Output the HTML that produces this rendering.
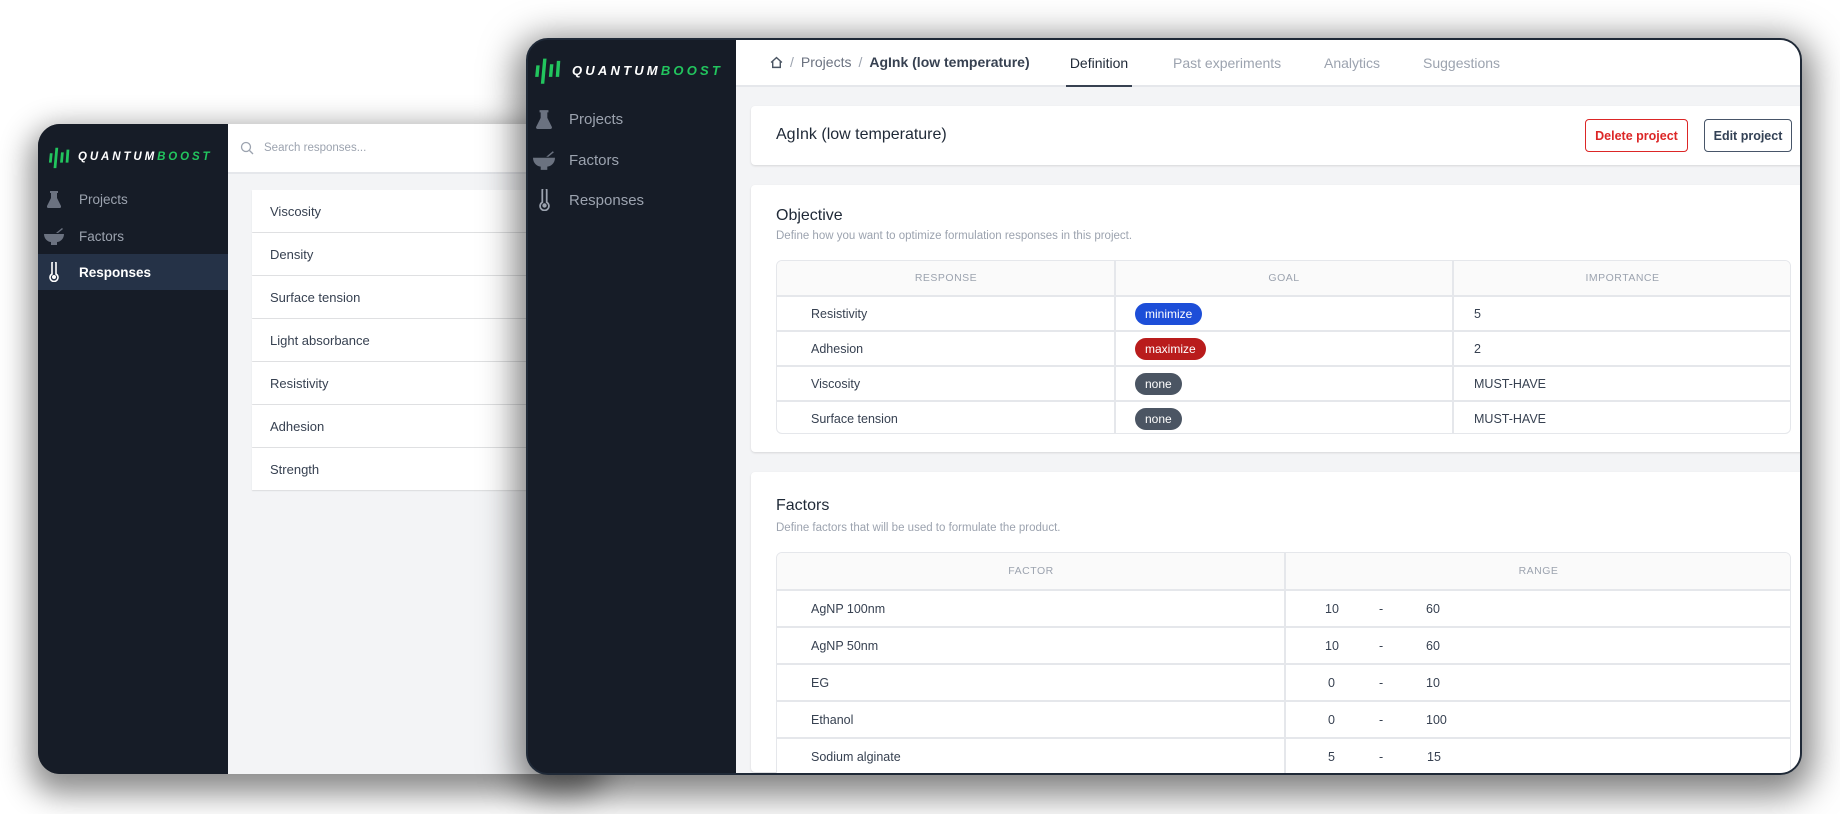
<!DOCTYPE html>
<html><head><meta charset="utf-8"><style>
*{box-sizing:border-box;margin:0;padding:0}
body{width:1840px;height:814px;background:#fff;position:relative;overflow:hidden;font-family:"Liberation Sans",sans-serif;color:#374151}
.abs{position:absolute}
.win{position:absolute;background:#161c27;border-radius:22px;overflow:hidden;box-shadow:0 12px 30px 8px rgba(0,0,0,.45)}
.side{position:absolute;left:0;top:0;bottom:0;background:#161c27}
.logo{position:absolute;display:flex;align-items:center;font-weight:bold;font-style:italic;letter-spacing:3.2px;font-size:13px}
.logo .q{color:#fff}.logo .b{color:#22c55e}
.nav{position:absolute;left:0;right:0;height:36px;display:flex;align-items:center;color:#9ca3af;font-size:15px}
.nav svg{position:absolute}
.main{position:absolute;background:#f3f4f6}
.card{position:absolute;background:#fff;border-radius:4px;box-shadow:0 1px 2px rgba(0,0,0,.12)}
.tbl{position:absolute;border:1px solid #e5e7eb;border-radius:6px;overflow:hidden;background:#fff;font-size:12.5px;color:#374151}
.row{position:absolute;left:0;right:0;border-top:2px solid #e5e7eb}
.hdr{background:#fafafa;color:#9ca3af;font-size:10.5px;letter-spacing:.5px}
.cell{position:absolute;top:0;bottom:0;display:flex;align-items:center}
.vl{position:absolute;top:0;bottom:0;width:2px;background:#e5e7eb}
.badge{color:#fff;border-radius:11px;height:22px;padding:0 10px;font-size:12px;display:flex;align-items:center}
.lst{position:absolute;left:252px;width:290px;height:42px;background:#fff;display:flex;align-items:center;padding-left:18px;font-size:13px;color:#374151;box-shadow:0 1px 1px rgba(0,0,0,.1)}
</style></head><body>

<!-- back window -->
<div class="win" style="left:38px;top:124px;width:560px;height:650px;">
  <div class="side" style="width:190px"></div>
  <div class="logo" style="left:10px;top:20px;letter-spacing:2.9px;font-size:11.5px">
    <svg width="26" height="26" viewBox="0 0 28 28"><path d="M2 10h3l-1 10H1z M8 4h3l-2 22H6z M14 9h3l-1 11h-3z M20 6h3l-1 14h-3z" fill="#22c55e"/></svg>
    <span class="q" style="margin-left:4px">QUANTUM</span><span class="b">BOOST</span></div>
  <div class="nav" style="top:57px;padding-left:41px;font-size:13.5px"><svg style="left:9px" width="14" height="18" viewBox="0 0 14 18"><path d="M3 1h8v2h-1v5l4 8c.5 1-.2 2-1.2 2H1.2C.2 18-.5 17 0 16l4-8V3H3z" fill="#6b7280"/></svg>Projects</div>
  <div class="nav" style="top:94px;padding-left:41px;font-size:13.5px"><svg style="left:6px" width="20" height="18" viewBox="0 0 20 18"><path d="M0 7h20c0 5-4 8-7 8v3H7v-3C4 15 0 12 0 7z M12 6l6-5 1 1-5 4z" fill="#6b7280"/></svg>Factors</div>
  <div class="nav" style="top:130px;padding-left:41px;background:#253247;color:#fff;font-weight:bold;font-size:13.5px"><svg style="left:11px" width="10" height="20" viewBox="0 0 10 20"><path d="M3 1a2 2 0 014 0v11a4 4 0 11-4 0z" fill="none" stroke="#fff" stroke-width="1.6"/><circle cx="5" cy="15" r="2" fill="#fff"/></svg>Responses</div>
  <div class="main" style="left:190px;top:0;right:0;bottom:0">
    <div class="abs" style="left:0;right:0;top:0;height:50px;background:#fff;border-bottom:2px solid #e5e7eb;display:flex;align-items:center;padding-left:12px;color:#9ca3af;font-size:11.5px">
      <svg width="14" height="14" viewBox="0 0 14 14" style="margin-right:10px"><circle cx="6" cy="6" r="4.5" fill="none" stroke="#9ca3af" stroke-width="1.3"/><path d="M9.5 9.5l3.5 3.5" stroke="#9ca3af" stroke-width="1.3"/></svg>Search responses...</div>
  </div>
</div>
<div class="lst" style="top:190px">Viscosity</div>
<div class="lst" style="top:233px">Density</div>
<div class="lst" style="top:276px">Surface tension</div>
<div class="lst" style="top:319px">Light absorbance</div>
<div class="lst" style="top:362px">Resistivity</div>
<div class="lst" style="top:405px">Adhesion</div>
<div class="lst" style="top:448px">Strength</div>

<!-- front window -->
<div class="win" style="left:526px;top:38px;width:1276px;height:737px;border:2px solid #1f2937;box-shadow:0 10px 35px 10px rgba(0,0,0,.5)">
  <div class="side" style="width:208px"></div>
  <div class="logo" style="left:6px;top:14px;">
    <svg width="32" height="32" viewBox="0 0 28 28"><path d="M2 10h3l-1 10H1z M8 4h3l-2 22H6z M14 9h3l-1 11h-3z M20 6h3l-1 14h-3z" fill="#22c55e"/></svg>
    <span class="q" style="margin-left:6px">QUANTUM</span><span class="b">BOOST</span></div>
  <div class="nav" style="top:61px;padding-left:41px"><svg style="left:8px" width="16" height="20" viewBox="0 0 14 18"><path d="M3 1h8v2h-1v5l4 8c.5 1-.2 2-1.2 2H1.2C.2 18-.5 17 0 16l4-8V3H3z" fill="#6b7280"/></svg>Projects</div>
  <div class="nav" style="top:102px;padding-left:41px"><svg style="left:5px" width="22" height="20" viewBox="0 0 20 18"><path d="M0 7h20c0 5-4 8-7 8v3H7v-3C4 15 0 12 0 7z M12 6l6-5 1 1-5 4z" fill="#6b7280"/></svg>Factors</div>
  <div class="nav" style="top:142px;padding-left:41px"><svg style="left:11px" width="11" height="22" viewBox="0 0 10 20"><path d="M3 1a2 2 0 014 0v11a4 4 0 11-4 0z" fill="none" stroke="#9ca3af" stroke-width="1.6"/><circle cx="5" cy="15" r="2" fill="#9ca3af"/></svg>Responses</div>
  <div class="main" style="left:208px;top:0;right:0;bottom:0">
    <div class="abs" style="left:0;right:0;top:0;height:47px;background:#fff;border-bottom:2px solid #e5e7eb"></div>
    <div class="abs" style="left:34px;top:10px;height:24px;display:flex;align-items:center;font-size:14px;color:#6b7280">
      <svg width="13" height="13" viewBox="0 0 12 12"><path d="M1 6L6 1.5 11 6M2.5 5v5.5h7V5" fill="none" stroke="#4b5563" stroke-width="1.3"/></svg>
      <span style="margin:0 7px;color:#9ca3af">/</span>Projects<span style="margin:0 7px;color:#9ca3af">/</span><b style="color:#374151">AgInk (low temperature)</b></div>
    <div class="abs" style="left:330px;top:0;width:66px;height:47px;border-bottom:2px solid #374151;display:flex;align-items:center;justify-content:center;font-size:14px;color:#1f2937">Definition</div>
    <div class="abs" style="left:437px;top:15px;font-size:14px;color:#9ca3af">Past experiments</div>
    <div class="abs" style="left:588px;top:15px;font-size:14px;color:#9ca3af">Analytics</div>
    <div class="abs" style="left:687px;top:15px;font-size:14px;color:#9ca3af">Suggestions</div>

    <div class="card" style="left:15px;top:66px;width:1060px;height:59px">
      <div class="abs" style="left:25px;top:20px;font-size:16px;color:#1f2937">AgInk (low temperature)</div>
      <div class="abs" style="left:834px;top:13px;width:103px;height:33px;border:1px solid #dc2626;border-radius:4px;color:#dc2626;font-size:12.5px;font-weight:bold;display:flex;align-items:center;justify-content:center">Delete project</div>
      <div class="abs" style="left:953px;top:13px;width:88px;height:33px;border:1px solid #475569;border-radius:4px;color:#334155;font-size:12.5px;font-weight:bold;display:flex;align-items:center;justify-content:center">Edit project</div>
    </div>

    <div class="card" style="left:15px;top:145px;width:1060px;height:267px">
      <div class="abs" style="left:25px;top:22px;font-size:16px;color:#1f2937">Objective</div>
      <div class="abs" style="left:25px;top:45px;font-size:11.5px;color:#9ca3af">Define how you want to optimize formulation responses in this project.</div>
      <div class="tbl" style="left:25px;top:75px;width:1015px;height:174px">
        <div class="row hdr" style="top:0;height:34px;border-top:0">
          <div class="cell" style="left:0;width:338px;justify-content:center">RESPONSE</div>
          <div class="cell" style="left:338px;width:338px;justify-content:center">GOAL</div>
          <div class="cell" style="left:676px;width:339px;justify-content:center">IMPORTANCE</div></div>
        <div class="row" style="top:34px;height:35px"><div class="cell" style="left:34px">Resistivity</div><div class="cell" style="left:358px"><span class="badge" style="background:#1d4ed8">minimize</span></div><div class="cell" style="left:697px">5</div></div>
        <div class="row" style="top:69px;height:35px"><div class="cell" style="left:34px">Adhesion</div><div class="cell" style="left:358px"><span class="badge" style="background:#b91c1c">maximize</span></div><div class="cell" style="left:697px">2</div></div>
        <div class="row" style="top:104px;height:35px"><div class="cell" style="left:34px">Viscosity</div><div class="cell" style="left:358px"><span class="badge" style="background:#4b5563">none</span></div><div class="cell" style="left:697px">MUST-HAVE</div></div>
        <div class="row" style="top:139px;height:35px"><div class="cell" style="left:34px">Surface tension</div><div class="cell" style="left:358px"><span class="badge" style="background:#4b5563">none</span></div><div class="cell" style="left:697px">MUST-HAVE</div></div>
        <div class="vl" style="left:337px"></div><div class="vl" style="left:675px"></div>
      </div>
    </div>

    <div class="card" style="left:15px;top:432px;width:1060px;height:300px">
      <div class="abs" style="left:25px;top:25px;font-size:16px;color:#1f2937">Factors</div>
      <div class="abs" style="left:25px;top:50px;font-size:11.5px;color:#9ca3af">Define factors that will be used to formulate the product.</div>
      <div class="tbl" style="left:25px;top:80px;width:1015px;height:258px">
        <div class="row hdr" style="top:0;height:36px;border-top:0">
          <div class="cell" style="left:0;width:508px;justify-content:center">FACTOR</div>
          <div class="cell" style="left:508px;width:507px;justify-content:center">RANGE</div></div>
        <div class="row" style="top:36px;height:37px"><div class="cell" style="left:34px">AgNP 100nm</div><div class="cell" style="left:548px">10</div><div class="cell" style="left:602px">-</div><div class="cell" style="left:649px">60</div></div>
        <div class="row" style="top:73px;height:37px"><div class="cell" style="left:34px">AgNP 50nm</div><div class="cell" style="left:548px">10</div><div class="cell" style="left:602px">-</div><div class="cell" style="left:649px">60</div></div>
        <div class="row" style="top:110px;height:37px"><div class="cell" style="left:34px">EG</div><div class="cell" style="left:551px">0</div><div class="cell" style="left:602px">-</div><div class="cell" style="left:649px">10</div></div>
        <div class="row" style="top:147px;height:37px"><div class="cell" style="left:34px">Ethanol</div><div class="cell" style="left:551px">0</div><div class="cell" style="left:602px">-</div><div class="cell" style="left:649px">100</div></div>
        <div class="row" style="top:184px;height:37px"><div class="cell" style="left:34px">Sodium alginate</div><div class="cell" style="left:551px">5</div><div class="cell" style="left:602px">-</div><div class="cell" style="left:650px">15</div></div>
        <div class="row" style="top:221px;height:37px"></div>
        <div class="vl" style="left:507px"></div>
      </div>
    </div>
  </div>
</div>
</body></html>
